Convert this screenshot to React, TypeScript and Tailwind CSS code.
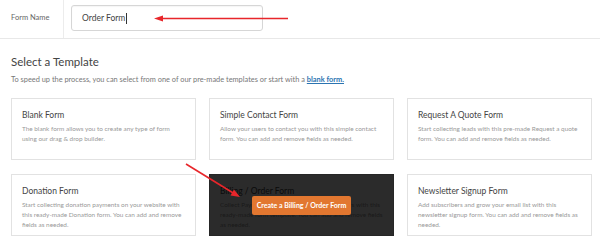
import React from "react";

const templates = [
  {
    title: "Blank Form",
    desc: "The blank form allows you to create any type of form using our drag & drop builder.",
  },
  {
    title: "Simple Contact Form",
    desc: "Allow your users to contact you with this simple contact form. You can add and remove fields as needed.",
  },
  {
    title: "Request A Quote Form",
    desc: "Start collecting leads with this pre-made Request a quote form. You can add and remove fields as needed.",
  },
  {
    title: "Donation Form",
    desc: "Start collecting donation payments on your website with this ready-made Donation form. You can add and remove fields as needed.",
  },
  {
    title: "Billing / Order Form",
    desc: "Collect Payments for product and service orders with this ready-made form template. You can add and remove fields as needed.",
    active: true,
  },
  {
    title: "Newsletter Signup Form",
    desc: "Add subscribers and grow your email list with this newsletter signup form. You can add and remove fields as needed.",
  },
];

function TemplateCard({ title, desc, active }: { title: string; desc: string; active?: boolean }) {
  return (
    <div className="relative h-[62px] border border-[#e2e2e2] bg-white px-[10px] pt-[10px]">
      <h3 className="text-[8.5px] leading-[12px] text-[#444]">{title}</h3>
      <p className="mt-[3px] text-[6.4px] leading-[10px] text-[#999]">{desc}</p>

      {/* Hover overlay */}
      {active && (
        <div className="absolute -inset-px flex items-center justify-center bg-black/[0.83]">
          <button className="h-[19px] w-[99px] whitespace-nowrap rounded-[2px] bg-[#e27730] text-[7px] font-bold text-white">
            Create a Billing / Order Form
          </button>
        </div>
      )}
    </div>
  );
}

export default function App() {
  return (
    <div className="relative h-[245px] w-[600px] overflow-hidden bg-white font-['Lato','Open_Sans',sans-serif]">
      {/* Form name row */}
      <div className="flex h-[39px] border-b border-[#e8e8e8]">
        <div className="flex w-[64px] shrink-0 items-center border-r border-[#ececec] pl-[11px] pb-[2px]">
          <span className="text-[7.5px] text-[#666]">Form Name</span>
        </div>
        <div className="pl-[7px] pt-[5px]">
          <div className="flex h-[26px] w-[192px] items-center rounded-[3px] border border-[#d6d6d6] pl-[10px] shadow-[inset_0_1px_1px_rgba(0,0,0,0.04)]">
            <span className="text-[8.5px] text-[#444]">Order Form</span>
            <span className="ml-px h-[11px] w-px bg-[#333]" />
          </div>
        </div>
      </div>

      {/* Template selection */}
      <div className="pl-[11px] pr-[8px] pt-[15px]">
        <h2 className="text-[11.5px] leading-[16px] text-[#444]">Select a Template</h2>
        <p className="mt-[4px] text-[7.4px] leading-[11px] text-[#777]">
          To speed up the process, you can select from one of our pre-made templates or start with a{" "}
          <span className="font-bold text-[#2b74b1] underline">blank form.</span>
        </p>

        <div className="mt-[13px] grid grid-cols-3 gap-x-[13px] gap-y-[14px]">
          {templates.map((t) => (
            <TemplateCard key={t.title} {...t} />
          ))}
        </div>
      </div>

      {/* Annotation arrows */}
      <svg className="pointer-events-none absolute inset-0" width="600" height="245">
        <line x1="288" y1="18.5" x2="160" y2="18.5" stroke="#e8262b" strokeWidth="1.6" />
        <polygon points="154,18.5 163,15.5 163,21.5" fill="#e8262b" />
        <line x1="186" y1="164" x2="234" y2="193.5" stroke="#e8262b" strokeWidth="1.6" />
        <polygon points="240,197 230.5,195.5 234,189.5" fill="#e8262b" />
      </svg>
    </div>
  );
}
